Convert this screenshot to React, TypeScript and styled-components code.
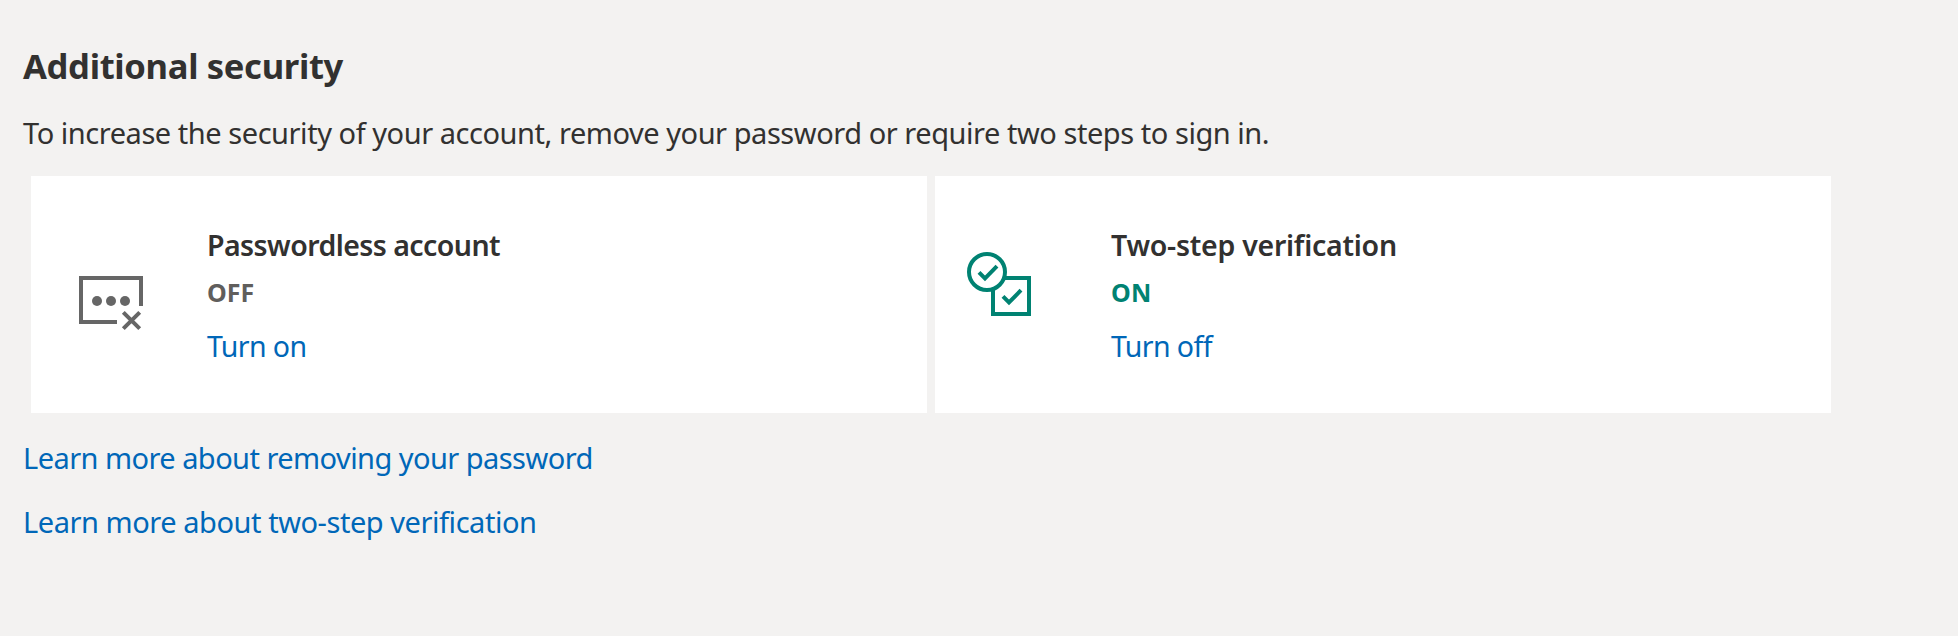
import React from 'react';
import styled, { createGlobalStyle } from 'styled-components';

const GlobalStyle = createGlobalStyle`
  * { box-sizing: border-box; }
  body {
    margin: 0;
    background: #f3f2f1;
    color: #323130;
    font-family: "Noto Sans", "Open Sans", sans-serif;
  }
`;

const Page = styled.main`
  min-height: 636px;
  padding: 42px 127px 0 23px;
  background: #f3f2f1;
`;

const Heading = styled.h2`
  margin: 0 0 23px;
  font-size: 34.6px;
  font-weight: 700;
  line-height: 48px;
  letter-spacing: -0.33px;
`;

const Intro = styled.p`
  margin: 0 0 23px;
  font-size: 29px;
  line-height: 40px;
  letter-spacing: -0.455px;
  white-space: nowrap;
`;

const Cards = styled.div`
  display: grid;
  grid-template-columns: 1fr 1fr;
  gap: 8px;
  margin: 0 0 25px 8px;
`;

const Card = styled.section`
  display: grid;
  grid-template-columns: 176px 1fr;
  height: 237px;
  background: #fff;
`;

const IconCell = styled.div<{ $top: number; $left: number }>`
  padding: ${(p) => p.$top}px 0 0 ${(p) => p.$left}px;

  svg { display: block; }
`;

const CardBody = styled.div`
  display: flex;
  flex-direction: column;
  align-items: flex-start;
  padding-top: 49px;
`;

const CardTitle = styled.h3<{ $tracking: number }>`
  margin: 0 0 11px;
  font-size: 28.5px;
  font-weight: 600;
  line-height: 40px;
  letter-spacing: ${(p) => p.$tracking}px;
`;

const Status = styled.div<{ $on?: boolean }>`
  margin-bottom: 18px;
  color: ${(p) => (p.$on ? '#008272' : '#605e5c')};
  font-size: 25px;
  font-weight: 700;
  line-height: 32px;
  letter-spacing: ${(p) => (p.$on ? 0.3 : 0)}px;
`;

const Link = styled.a<{ $tracking: number; $size?: number }>`
  color: #0067b8;
  font-size: ${(p) => p.$size ?? 29}px;
  line-height: 40px;
  letter-spacing: ${(p) => p.$tracking}px;
  text-decoration: none;
  white-space: nowrap;
`;

const Links = styled.nav`
  display: flex;
  flex-direction: column;
  align-items: flex-start;
  gap: 24px;
`;

const PasswordlessIcon = () => (
  <svg width="64" height="56" viewBox="0 0 64 56" fill="none" stroke="#666" strokeWidth="4">
    <path d="M38 46H2V2H62V30" />
    <path d="M44.3 36.3L60.7 52.7M60.7 36.3L44.3 52.7" strokeWidth="4" />
    <g fill="#666" stroke="none">
      <circle cx="18" cy="25" r="5" />
      <circle cx="32" cy="25" r="5" />
      <circle cx="46" cy="25" r="5" />
    </g>
  </svg>
);

const TwoStepIcon = () => (
  <svg width="64" height="64" viewBox="0 0 64 64" fill="none" stroke="#008272" strokeWidth="4">
    <rect x="26" y="26" width="36" height="36" />
    <circle cx="20" cy="20" r="18" fill="#fff" />
    <path d="M12 20.3L18 26.5L30 14.2" />
    <path d="M36 44.3L42 50.5L54 38.2" />
  </svg>
);

export default function App() {
  return (
    <>
      <GlobalStyle />
      <Page>
        <Heading>Additional security</Heading>
        <Intro>
          To increase the security of your account, remove your password or require two steps to sign in.
        </Intro>
        <Cards>
          <Card>
            <IconCell $top={100} $left={48}>
              <PasswordlessIcon />
            </IconCell>
            <CardBody>
              <CardTitle $tracking={-0.56}>Passwordless account</CardTitle>
              <Status>OFF</Status>
              <Link $tracking={-0.6} $size={28.5}>Turn on</Link>
            </CardBody>
          </Card>
          <Card>
            <IconCell $top={76} $left={32}>
              <TwoStepIcon />
            </IconCell>
            <CardBody>
              <CardTitle $tracking={-0.26}>Two-step verification</CardTitle>
              <Status $on>ON</Status>
              <Link $tracking={-0.6} $size={28.5}>Turn off</Link>
            </CardBody>
          </Card>
        </Cards>
        <Links>
          <Link $tracking={-0.553}>Learn more about removing your password</Link>
          <Link $tracking={-0.45}>Learn more about two-step verification</Link>
        </Links>
      </Page>
    </>
  );
}
